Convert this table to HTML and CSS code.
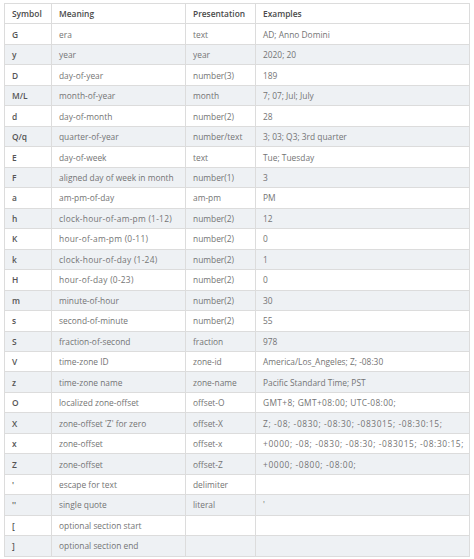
FILE: index.html
```html
<!DOCTYPE html>
<html>
<head>
<meta charset="utf-8">
<link rel="stylesheet" href="styles.css">
</head>
<body>
<div class="wrap">
<table class="fmt">
<colgroup>
<col class="c1"><col class="c2"><col class="c3"><col class="c4">
</colgroup>
<thead>
<tr><th>Symbol</th><th>Meaning</th><th>Presentation</th><th>Examples</th></tr>
</thead>
<tbody>
<tr><td class="sym">G</td><td>era</td><td>text</td><td>AD; Anno Domini</td></tr>
<tr><td class="sym">y</td><td>year</td><td>year</td><td>2020; 20</td></tr>
<tr><td class="sym">D</td><td>day-of-year</td><td>number(3)</td><td>189</td></tr>
<tr><td class="sym">M/L</td><td>month-of-year</td><td>month</td><td>7; 07; Jul; July</td></tr>
<tr><td class="sym">d</td><td>day-of-month</td><td>number(2)</td><td>28</td></tr>
<tr><td class="sym">Q/q</td><td>quarter-of-year</td><td>number/text</td><td>3; 03; Q3; 3rd quarter</td></tr>
<tr><td class="sym">E</td><td>day-of-week</td><td>text</td><td>Tue; Tuesday</td></tr>
<tr><td class="sym">F</td><td>aligned day of week in month</td><td>number(1)</td><td>3</td></tr>
<tr><td class="sym">a</td><td>am-pm-of-day</td><td>am-pm</td><td>PM</td></tr>
<tr><td class="sym">h</td><td class="num-s">clock-hour-of-am-pm (1-12)</td><td>number(2)</td><td>12</td></tr>
<tr><td class="sym">K</td><td class="num-s">hour-of-am-pm (0-11)</td><td>number(2)</td><td>0</td></tr>
<tr><td class="sym">k</td><td class="num-s">clock-hour-of-day (1-24)</td><td>number(2)</td><td>1</td></tr>
<tr><td class="sym">H</td><td class="num-s">hour-of-day (0-23)</td><td>number(2)</td><td>0</td></tr>
<tr><td class="sym">m</td><td>minute-of-hour</td><td>number(2)</td><td>30</td></tr>
<tr><td class="sym">s</td><td>second-of-minute</td><td>number(2)</td><td>55</td></tr>
<tr><td class="sym">S</td><td>fraction-of-second</td><td>fraction</td><td>978</td></tr>
<tr><td class="sym">V</td><td>time-zone ID</td><td>zone-id</td><td>America/Los_Angeles; Z; -08:30</td></tr>
<tr><td class="sym">z</td><td>time-zone name</td><td>zone-name</td><td>Pacific Standard Time; PST</td></tr>
<tr><td class="sym">O</td><td>localized zone-offset</td><td>offset-O</td><td class="num-m">GMT+8; GMT+08:00; UTC-08:00;</td></tr>
<tr><td class="sym">X</td><td>zone-offset 'Z' for zero</td><td>offset-X</td><td class="num">Z; -08; -0830; -08:30; -083015; -08:30:15;</td></tr>
<tr><td class="sym">x</td><td>zone-offset</td><td>offset-x</td><td class="num">+0000; -08; -0830; -08:30; -083015; -08:30:15;</td></tr>
<tr><td class="sym">Z</td><td>zone-offset</td><td>offset-Z</td><td class="num">+0000; -0800; -08:00;</td></tr>
<tr><td class="sym">'</td><td>escape for text</td><td>delimiter</td><td></td></tr>
<tr><td class="sym">''</td><td>single quote</td><td>literal</td><td>'</td></tr>
<tr><td class="sym">[</td><td>optional section start</td><td></td><td></td></tr>
<tr><td class="sym">]</td><td>optional section end</td><td></td><td></td></tr>
</tbody>
</table>
</div>
</body>
</html>
```
FILE: styles.css
```css
html, body {
  margin: 0;
  padding: 0;
  background: #ffffff;
}
.wrap {
  padding: 3px 0 0 4px;
}
.fmt {
  border-collapse: collapse;
  table-layout: fixed;
  width: 465px;
  font-family: "Open Sans", "Liberation Sans", sans-serif;
  font-size: 8.4px;
  color: #747474;
}
.c1 { width: 47px; }
.c2 { width: 134px; }
.c3 { width: 70px; }
.c4 { width: 214px; }
.fmt th, .fmt td {
  border: 1px solid #dcdcdc;
  height: 20.48px;
  padding: 0 0 0 7px;
  text-align: left;
  white-space: nowrap;
  overflow: hidden;
  box-sizing: border-box;
}
.fmt th {
  font-weight: 600;
  color: #4a4a4a;
}
.fmt td.sym {
  font-weight: 600;
  color: #555555;
}
.fmt td.num {
  letter-spacing: 0.6px;
}
.fmt td.num-m {
  letter-spacing: 0.35px;
}
.fmt td.num-s {
  letter-spacing: 0.25px;
}
.fmt tbody tr:nth-child(even) td {
  background: #eef1f4;
}
```
